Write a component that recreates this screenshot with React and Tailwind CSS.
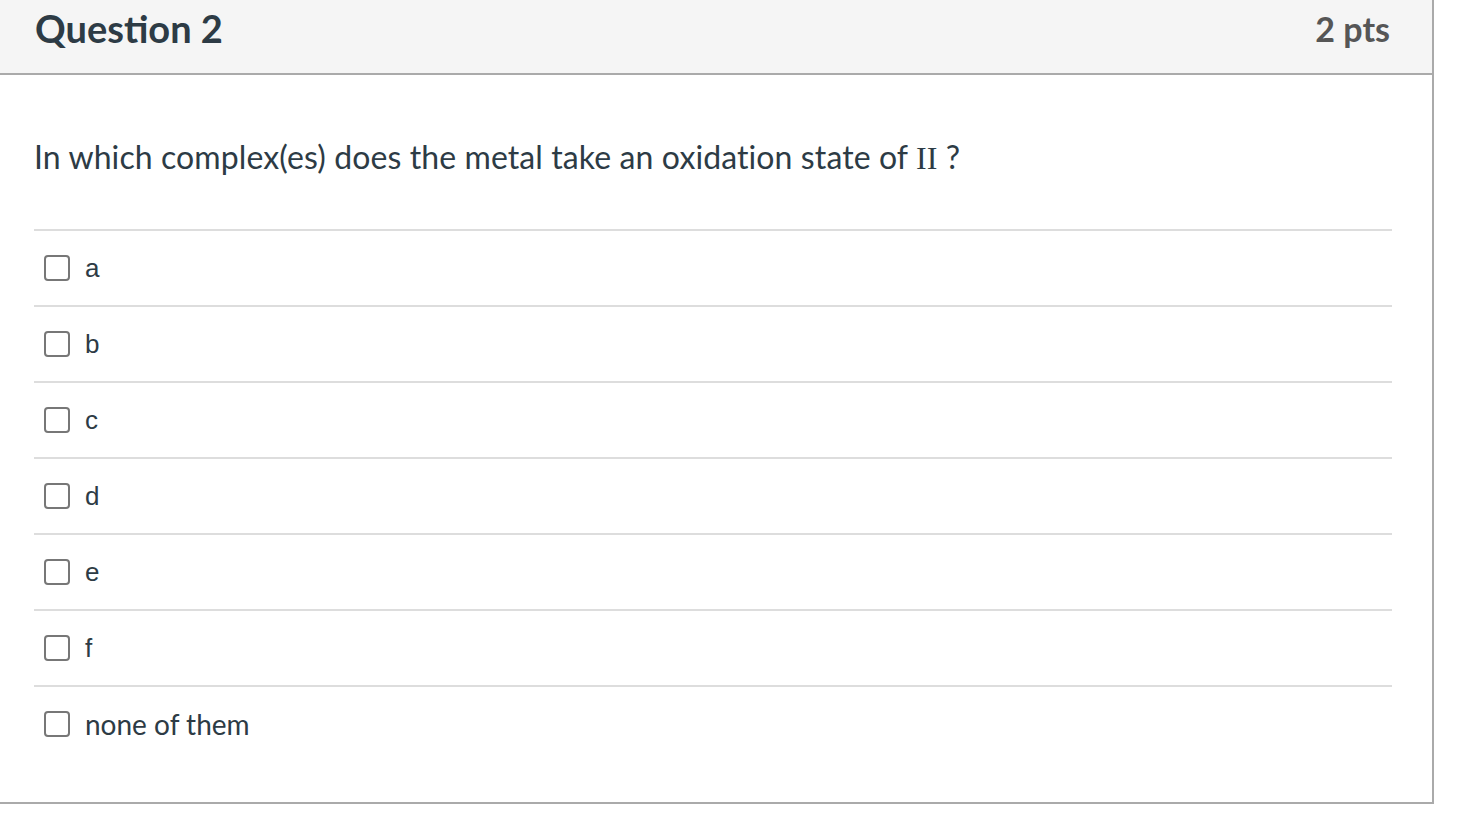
const options = ["a", "b", "c", "d", "e", "f"];

function Box() {
  return <span className="ml-[10px] h-[26px] w-[26px] shrink-0 rounded-[4px] border-2 border-[#777777] bg-white" />;
}

export default function App() {
  return (
    <div className="min-h-screen bg-white font-['Lato',sans-serif] text-[#2d3b45]">
      <div className="w-[1434px] border-r-2 border-b-2 border-[#aaaaaa]">
        <div className="flex h-[75px] items-start justify-between border-b-2 border-[#aaaaaa] bg-[#f5f5f5] pl-[35px] pr-[42px]">
          <h2 className="pt-[9px] text-[38px] font-bold leading-none">Question 2</h2>
          <div className="pt-[12px] text-[34px] font-bold leading-none text-[#565656]">2 pts</div>
        </div>
        <div className="pl-[34px] pr-[40px] pt-[61px] pb-[41px]">
          <p className="mb-[50px] text-[32px] leading-[42px] tracking-[0.1px]">
            In which complex(es) does the metal take an oxidation state of{" "}
            <span className="font-['Liberation_Serif',serif]">II</span> ?
          </p>
          {options.map((opt) => (
            <div key={opt} className="flex h-[76px] items-center border-t-2 border-[#dddddd]">
              <Box />
              <span className="ml-[15px] font-['Liberation_Sans',sans-serif] text-[26px]">{opt}</span>
            </div>
          ))}
          <div className="flex h-[76px] items-center border-t-2 border-[#dddddd]">
            <Box />
            <span className="ml-[15px] text-[28px]">none of them</span>
          </div>
        </div>
      </div>
    </div>
  );
}
